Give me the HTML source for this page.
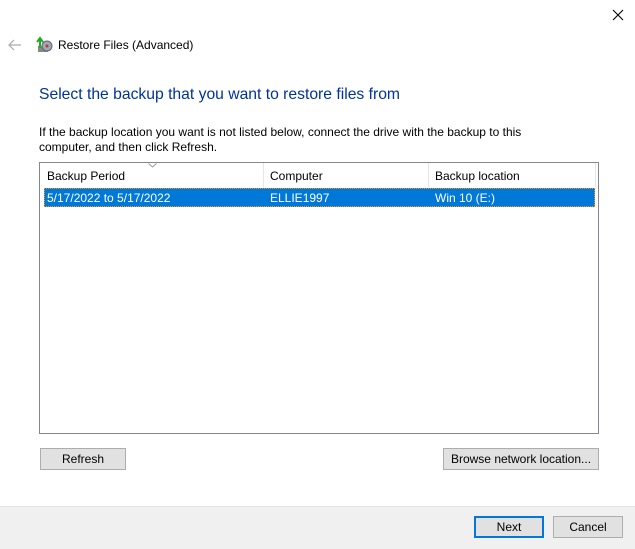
<!DOCTYPE html>
<html><head><style>
body{margin:0;width:635px;height:548px;background:#fff;font-family:"Liberation Sans",sans-serif;font-size:12px;color:#000;position:relative;overflow:hidden}
.a{position:absolute}
.btn{position:absolute;background:#e1e1e1;border:1px solid #adadad;box-sizing:border-box;text-align:center;line-height:20px;font-size:12px}
</style></head><body>
<svg class="a" style="left:612px;top:9px" width="12" height="12"><path d="M1 1L11 11M11 1L1 11" stroke="#000" stroke-width="1.1"/></svg>
<svg class="a" style="left:8px;top:39px" width="14" height="12"><path d="M1 6H13M6 1L1 6L6 11" stroke="#aaa" stroke-width="1.2" fill="none"/></svg>
<svg class="a" style="left:36px;top:36px" width="18" height="18"><rect x="2" y="10" width="10" height="6" fill="#888"/><circle cx="11" cy="10" r="5" fill="#9ab" stroke="#666"/><circle cx="11" cy="10" r="1.5" fill="#c33"/><path d="M4 12V3M1 6l3-4 3 4" stroke="#2a2" stroke-width="2" fill="none"/></svg>
<div class="a" style="left:58px;top:38px;font-size:12px">Restore Files (Advanced)</div>
<div class="a" style="left:39px;top:86px;font-size:15.7px;color:#003399">Select the backup that you want to restore files from</div>
<div class="a" style="left:39px;top:125px;line-height:15px;width:520px">If the backup location you want is not listed below, connect the drive with the backup to this computer, and then click Refresh.</div>
<div class="a" style="left:39px;top:162px;width:558px;height:270px;border:1px solid #828790"></div>
<div class="a" style="left:263px;top:163px;width:1px;height:24px;background:#e5e5e5"></div>
<div class="a" style="left:428px;top:163px;width:1px;height:24px;background:#e5e5e5"></div>
<div class="a" style="left:595px;top:163px;width:1px;height:24px;background:#e5e5e5"></div>
<svg class="a" style="left:148px;top:163px" width="9" height="5"><path d="M0.5 0.5L4.5 4L8.5 0.5" stroke="#999" fill="none"/></svg>
<div class="a" style="left:47px;top:169px">Backup Period</div>
<div class="a" style="left:270px;top:169px">Computer</div>
<div class="a" style="left:435px;top:169px">Backup location</div>
<div class="a" style="left:44px;top:188px;width:551px;height:19px;background:#0078d7;outline:1px dotted #f90;outline-offset:-1px"></div>
<div class="a" style="left:47px;top:191px;color:#fff">5/17/2022 to 5/17/2022</div>
<div class="a" style="left:270px;top:191px;color:#fff">ELLIE1997</div>
<div class="a" style="left:435px;top:191px;color:#fff">Win 10 (E:)</div>
<div class="btn" style="left:40px;top:448px;width:86px;height:22px">Refresh</div>
<div class="btn" style="left:443px;top:448px;width:156px;height:22px">Browse network location...</div>
<div class="a" style="left:0;top:506px;width:635px;height:42px;background:#f0f0f0;border-top:1px solid #e3e3e3"></div>
<div class="btn" style="left:474px;top:516px;width:70px;height:22px;border:2px solid #0078d7;line-height:18px">Next</div>
<div class="btn" style="left:553px;top:516px;width:70px;height:22px">Cancel</div>
</body></html>
